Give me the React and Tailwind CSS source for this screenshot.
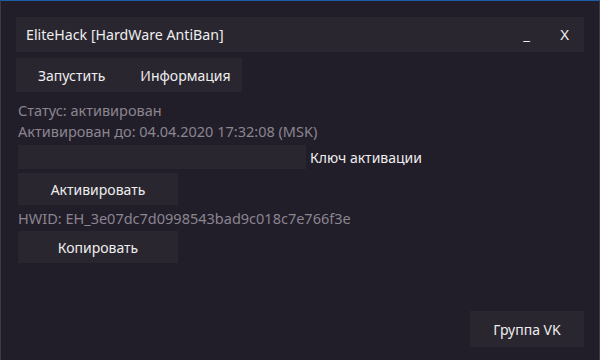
export default function App() {
  return (
    <div
      className="w-[600px] h-[360px] bg-[#221e29] border-t border-t-[#1a5da8] border-x border-x-[#3c3a48] flex flex-col px-[15px] pt-[16px] text-[14px] text-[#eeeeee]"
      style={{ fontFamily: '"Noto Sans", "Open Sans", sans-serif' }}
    >
      {/* Title bar */}
      <div className="h-[35px] bg-[#2a2630] flex items-center pl-[10px] pr-[15px]">
        <span className="flex-1 text-[14.2px]">EliteHack [HardWare AntiBan]</span>
        <span className="w-[37px] text-[15px]">_</span>
        <span className="text-[15px]">X</span>
      </div>

      {/* Tabs */}
      <div className="mt-[6px] h-[34px] w-[226px] bg-[#2a2630] flex items-center">
        <button className="pl-[22px] pr-[17px] h-full">Запустить</button>
        <button className="px-[18px] h-full">Информация</button>
      </div>

      <div className="pl-[2px] flex flex-col text-[14.5px]">
        <div className="mt-[8px] leading-[21px] text-[#8a8590]">Статус: активирован</div>
        <div className="leading-[21px] text-[#8a8590]">Активирован до: 04.04.2020 17:32:08 (MSK)</div>

        <div className="mt-[3px] flex items-center">
          <div className="w-[288px] h-[24px] bg-[#2a2630]" />
          <span className="ml-[4px] text-[14px]">Ключ активации</span>
        </div>

        <button className="mt-[4px] w-[160px] h-[32px] bg-[#2a2630] text-[14px]">Активировать</button>

        <div className="mt-[3px] leading-[21px] text-[#8a8590]">HWID: EH_3e07dc7d0998543bad9c018c7e766f3e</div>

        <button className="mt-[2px] w-[160px] h-[32px] bg-[#2a2630] text-[14px]">Копировать</button>
      </div>

      <div className="mt-auto mb-[13px] flex justify-end">
        <button className="w-[114px] h-[36px] bg-[#2a2630]">Группа VK</button>
      </div>
    </div>
  );
}
